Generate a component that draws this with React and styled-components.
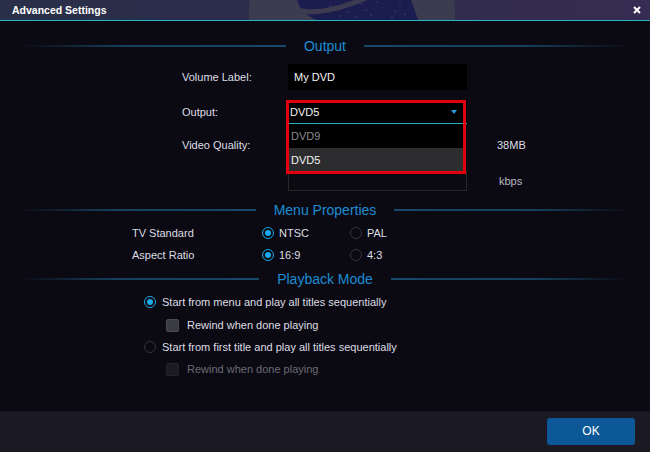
import React from "react";
import styled, { createGlobalStyle } from "styled-components";

const GlobalStyle = createGlobalStyle`
  html, body {
    margin: 0;
    padding: 0;
    background: #0b0a13;
  }
  * {
    box-sizing: border-box;
  }
`;

const Window = styled.div`
  width: 650px;
  height: 452px;
  display: flex;
  flex-direction: column;
  background: #0b0a13;
  color: #dedde4;
  font-family: "Liberation Sans", Arial, sans-serif;
  font-size: 11px;
  overflow: hidden;
`;

const TitleBar = styled.div`
  position: relative;
  height: 21px;
  flex-shrink: 0;
  display: flex;
  align-items: center;
  justify-content: space-between;
  padding: 0 8px 1px 12px;
  background: linear-gradient(90deg, #2a3049 0%, #2c2c4b 45%, #372c51 100%);
  border-bottom: 1px solid #22b6c6;
`;

const TitleArt = styled.svg`
  position: absolute;
  left: 0;
  top: 0;
  width: 650px;
  height: 20px;
  z-index: 0;
`;

const TitleText = styled.span`
  position: relative;
  z-index: 1;
  font-weight: bold;
  font-size: 10.5px;
  color: #ffffff;
`;

const CloseBtn = styled.button`
  position: relative;
  z-index: 1;
  border: none;
  background: transparent;
  padding: 0;
  width: 10px;
  height: 10px;
  display: flex;
  align-items: center;
  justify-content: center;
  cursor: pointer;
`;

const Body = styled.div`
  flex: 1;
  padding-top: 15px;
  display: flex;
  flex-direction: column;
`;

const SectionTitle = styled.div`
  display: flex;
  align-items: center;
  height: 20px;
  padding: 0 20px;
  margin-top: ${(p) => p.$mt || 0}px;
  & span {
    color: #1d8dd3;
    font-size: 14px;
    padding: 0 18px;
    white-space: nowrap;
  }
`;

const Rule = styled.div`
  flex: 1;
  height: 2px;
  background: linear-gradient(
    ${(p) => (p.$flip ? "270deg" : "90deg")},
    rgba(20, 64, 92, 0) 0%,
    #15415d 40%,
    #17476a 100%
  );
`;

const FieldRow = styled.div`
  display: grid;
  grid-template-columns: 106px 179px auto;
  align-items: center;
  padding-left: 182px;
  height: ${(p) => p.$h}px;
  margin-top: ${(p) => p.$mt}px;
`;

const Label = styled.span`
  color: #dedde4;
`;

const Unit = styled.span`
  padding-left: ${(p) => p.$pl || 30}px;
  color: ${(p) => p.$dim ? "#b8b7c0" : "#dedde4"};
`;

const TextBox = styled.div`
  height: 100%;
  background: #000;
  display: flex;
  align-items: center;
  padding-left: 6px;
  color: #f2f2f2;
`;

const EmptyBox = styled.div`
  height: 100%;
  border: 1px solid #2b2628;
  background: #0b0a10;
`;

const SelectCell = styled.div`
  position: relative;
  height: 100%;
`;

const SelectBox = styled.div`
  height: 100%;
  background: #000;
  border-bottom: 1px solid #20b2c2;
  display: flex;
  align-items: center;
  justify-content: space-between;
  padding: 0 10px 0 2px;
  color: #f4f4f4;
`;

const Caret = styled.span`
  width: 0;
  height: 0;
  border-left: 3.5px solid transparent;
  border-right: 3.5px solid transparent;
  border-top: 4px solid #1a9be2;
`;

const Dropdown = styled.div`
  position: absolute;
  top: 24px;
  left: 1px;
  right: 1px;
  background: #000;
  z-index: 2;
`;

const Option = styled.div`
  height: 24px;
  display: flex;
  align-items: center;
  padding-left: 2px;
  color: ${(p) => (p.$active ? "#f2f2f2" : "#8a8a8e")};
  background: ${(p) => (p.$active ? "#2d2d2f" : "transparent")};
`;

const Highlight = styled.div`
  position: absolute;
  left: -2px;
  right: 1px;
  top: 0;
  height: 74px;
  border: 3px solid #e3000e;
  z-index: 3;
  pointer-events: none;
`;

const OptionRow = styled.div`
  display: grid;
  grid-template-columns: 130px 88px auto;
  align-items: center;
  padding-left: 132px;
  height: 18px;
  margin-top: ${(p) => p.$mt}px;
`;

const Choice = styled.label`
  display: flex;
  align-items: center;
  gap: ${(p) => p.$gap || 5}px;
  color: ${(p) => (p.$disabled ? "#6c6b73" : "#dedde4")};
`;

const Radio = styled.span`
  width: 12px;
  height: 12px;
  border-radius: 50%;
  flex-shrink: 0;
  border: 1.5px solid ${(p) => (p.$on ? "#1aa9ea" : "#34333e")};
  background: #0b0a13;
  display: flex;
  align-items: center;
  justify-content: center;
  &::after {
    content: "";
    width: 6px;
    height: 6px;
    border-radius: 50%;
    background: ${(p) => (p.$on ? "#1aa9ea" : "transparent")};
  }
`;

const Check = styled.span`
  width: 13px;
  height: 13px;
  flex-shrink: 0;
  border-radius: 2px;
  border: 1px solid ${(p) => (p.$disabled ? "#24232c" : "#4a4a52")};
  background: ${(p) => (p.$disabled ? "#1c1b24" : "#3a3a42")};
`;

const PlayRow = styled.div`
  display: flex;
  align-items: center;
  height: 18px;
  padding-left: ${(p) => p.$pl}px;
  margin-top: ${(p) => p.$mt}px;
`;

const Footer = styled.div`
  height: 41px;
  flex-shrink: 0;
  background: #1b1a24;
  border-top: 1px solid #14131b;
  display: flex;
  align-items: center;
  justify-content: flex-end;
  padding: 0 15px 2px 0;
`;

const OkButton = styled.button`
  width: 88px;
  height: 27px;
  border: none;
  border-radius: 3px;
  background: #0c5896;
  color: #ffffff;
  font-family: "Liberation Sans", Arial, sans-serif;
  font-size: 12px;
  cursor: pointer;
`;

const Heading = ({ children, mt }) => (
  <SectionTitle $mt={mt}>
    <Rule />
    <span>{children}</span>
    <Rule $flip />
  </SectionTitle>
);

const stars = [
  [330, 6], [348, 12], [362, 4], [371, 15], [384, 8], [392, 17], [400, 5],
  [356, 17], [377, 2], [340, 16], [395, 11], [366, 10], [405, 14],
];

export default function App() {
  return (
    <>
      <GlobalStyle />
      <Window>
        <TitleBar>
          <TitleArt viewBox="0 0 650 20">
            <circle cx="352" cy="10" r="103" fill="#3c3b4f" />
            <path
              d="M 297 0 L 411 0 Q 415 10 418 20 L 317 20 Q 301 14 297 0 Z"
              fill="#1b1d4f"
            />
            <path
              d="M 296 9 Q 318 18 366 -2"
              stroke="#3c3b4f"
              strokeWidth="5"
              fill="none"
            />
            <circle cx="307" cy="3" r="5" fill="#1b1d4f" />
            {stars.map(([x, y], i) => (
              <circle key={i} cx={x} cy={y} r="0.5" fill="#8f93c8" opacity="0.7" />
            ))}
          </TitleArt>
          <TitleText>Advanced Settings</TitleText>
          <CloseBtn aria-label="Close">
            <svg width="8" height="8" viewBox="0 0 8 8">
              <path d="M1 1 L7 7 M7 1 L1 7" stroke="#ffffff" strokeWidth="2" />
            </svg>
          </CloseBtn>
        </TitleBar>

        <Body>
          <Heading>Output</Heading>
          <FieldRow $h={26} $mt={8}>
            <Label>Volume Label:</Label>
            <TextBox>My DVD</TextBox>
          </FieldRow>
          <FieldRow $h={24} $mt={10}>
            <Label>Output:</Label>
            <SelectCell>
              <SelectBox>
                DVD5
                <Caret />
              </SelectBox>
              <Dropdown>
                <Option>DVD9</Option>
                <Option $active>DVD5</Option>
              </Dropdown>
              <Highlight />
            </SelectCell>
          </FieldRow>
          <FieldRow $h={24} $mt={9}>
            <Label>Video Quality:</Label>
            <div />
            <Unit>38MB</Unit>
          </FieldRow>
          <FieldRow $h={20} $mt={14}>
            <span />
            <EmptyBox />
            <Unit $pl={32} $dim>kbps</Unit>
          </FieldRow>

          <Heading mt={9}>Menu Properties</Heading>
          <OptionRow $mt={4}>
            <Label>TV Standard</Label>
            <Choice>
              <Radio $on />
              NTSC
            </Choice>
            <Choice>
              <Radio />
              PAL
            </Choice>
          </OptionRow>
          <OptionRow $mt={4}>
            <Label>Aspect Ratio</Label>
            <Choice>
              <Radio $on />
              16:9
            </Choice>
            <Choice>
              <Radio />
              4:3
            </Choice>
          </OptionRow>

          <Heading mt={5}>Playback Mode</Heading>
          <PlayRow $pl={144} $mt={4}>
            <Choice $gap={6}>
              <Radio $on />
              Start from menu and play all titles sequentially
            </Choice>
          </PlayRow>
          <PlayRow $pl={166} $mt={5}>
            <Choice $gap={8}>
              <Check />
              Rewind when done playing
            </Choice>
          </PlayRow>
          <PlayRow $pl={144} $mt={4}>
            <Choice $gap={6}>
              <Radio />
              Start from first title and play all titles sequentially
            </Choice>
          </PlayRow>
          <PlayRow $pl={166} $mt={4}>
            <Choice $gap={8} $disabled>
              <Check $disabled />
              Rewind when done playing
            </Choice>
          </PlayRow>
        </Body>

        <Footer>
          <OkButton>OK</OkButton>
        </Footer>
      </Window>
    </>
  );
}
